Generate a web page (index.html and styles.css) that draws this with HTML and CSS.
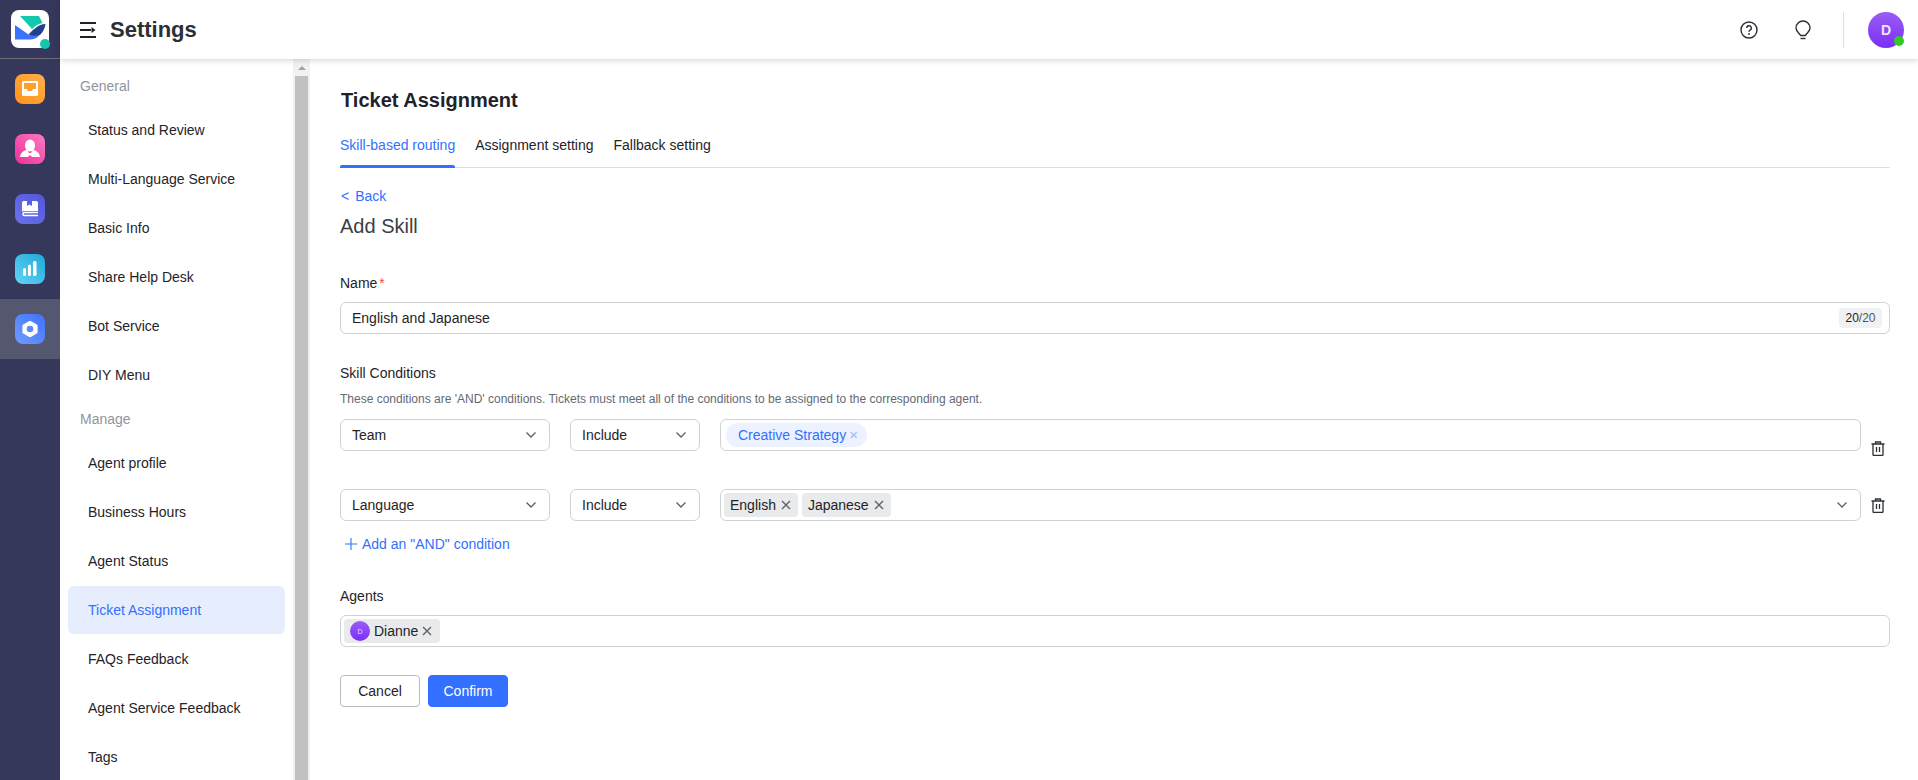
FILE: index.html
```html
<!DOCTYPE html>
<html lang="en">
<head>
<meta charset="utf-8">
<title>Settings</title>
<link rel="stylesheet" href="styles.css">
</head>
<body>
<div class="app">
  <nav class="rail">
    <div class="rail-logo">
      <div class="logo-box">
        <svg width="38" height="38" viewBox="0 0 38 38">
          <path d="M9 6H28L31.500 13C27 14 24 16 21 19Z" fill="#12c9ad"/>
          <path d="M4 15L17.500 24.500L29 24C27 28 23 29.500 18 29.500H4Z" fill="#3a72ff"/>
          <path d="M34.500 14C27 14.500 23 19 17.500 24.500C22 26 27 26 29.500 24.500C32 22 34 18 34.500 14Z" fill="#23408f"/>
        </svg>
        <span class="logo-dot"></span>
      </div>
    </div>
    <a class="rail-item"><span class="tile tile-orange">
      <svg width="30" height="30" viewBox="0 0 30 30"><rect x="7" y="7" width="16" height="15" rx="1.500" fill="#fff"/><path d="M9 9H21V15H18L17 17H13L12 15H9Z" fill="#ffa02e"/></svg>
    </span></a>
    <a class="rail-item"><span class="tile tile-pink">
      <svg width="30" height="30" viewBox="0 0 30 30"><ellipse cx="15" cy="11.500" rx="5" ry="6" fill="#fff"/><path d="M5 23C5.500 18.500 8.500 17 12 15.500L14 19H16L18 15.500C21.500 17 24.500 18.500 25 23H17L16 21.500H14L13 23Z" fill="#fff"/></svg>
    </span></a>
    <a class="rail-item"><span class="tile tile-violet">
      <svg width="30" height="30" viewBox="0 0 30 30"><path d="M8.500 7H12V12L14.500 10.500L17 12V7H21.500A1.500 1.500 0 0 1 23 8.500V17H9.500A2.500 2.500 0 0 0 7 18V8.500A1.500 1.500 0 0 1 8.500 7Z" fill="#fff"/><path d="M23 18.500H9.500A1.500 1.500 0 0 0 9.500 21.500H23" fill="none" stroke="#fff" stroke-width="1.500"/></svg>
    </span></a>
    <a class="rail-item"><span class="tile tile-sky">
      <svg width="30" height="30" viewBox="0 0 30 30"><rect x="8" y="14" width="3" height="8" rx="1.500" fill="#fff"/><rect x="13" y="10.500" width="3" height="11.500" rx="1.500" fill="#fff"/><rect x="18" y="7" width="3.500" height="15" rx="1.500" fill="#fff"/></svg>
    </span></a>
    <a class="rail-item rail-active"><span class="tile tile-blue">
      <svg width="30" height="30" viewBox="0 0 30 30"><path d="M15 8.500L21 11.800V18.200L15 21.500L9 18.200V11.800Z" fill="#fff" stroke="#fff" stroke-width="3.200" stroke-linejoin="round"/><circle cx="15" cy="15" r="3.300" fill="#5f8bff"/></svg>
    </span></a>
  </nav>
  <div class="shell">
    <header class="topbar">
      <svg class="menu-icon" width="16" height="16" viewBox="0 0 16 16"><path d="M0 1H16M0 8H11M0 15H16" fill="none" stroke="#1f2329" stroke-width="2"/><path d="M11.500 5L15.500 8L11.500 11Z" fill="#1f2329"/></svg>
      <h1 class="app-title">Settings</h1>
      <div class="top-actions">
        <svg width="18" height="18" viewBox="0 0 18 18"><circle cx="9" cy="9" r="8" fill="none" stroke="#2b2f36" stroke-width="1.400"/><path d="M6.700 7.100A2.300 2.300 0 1 1 9.900 9.200C9.200 9.600 9 10 9 10.800" fill="none" stroke="#2b2f36" stroke-width="1.400"/><circle cx="9" cy="13" r="0.900" fill="#2b2f36"/></svg>
        <svg class="bulb" width="18" height="20" viewBox="0 0 18 20"><path d="M6.500 15.500C6.300 13.500 2 12 2 8A7 7 0 0 1 16 8C16 12 11.700 13.500 11.500 15.500Z" fill="none" stroke="#2b2f36" stroke-width="1.400" stroke-linejoin="round"/><path d="M6.500 18.500H11.500" stroke="#2b2f36" stroke-width="1.400"/></svg>
        <span class="top-divider"></span>
        <span class="avatar">D<span class="avatar-dot"></span></span>
      </div>
    </header>
    <div class="body">
      <aside class="sidebar">
        <div class="group">General</div>
        <a class="item">Status and Review</a>
        <a class="item">Multi-Language Service</a>
        <a class="item">Basic Info</a>
        <a class="item">Share Help Desk</a>
        <a class="item">Bot Service</a>
        <a class="item">DIY Menu</a>
        <div class="group group-next">Manage</div>
        <a class="item">Agent profile</a>
        <a class="item">Business Hours</a>
        <a class="item">Agent Status</a>
        <a class="item item-active">Ticket Assignment</a>
        <a class="item">FAQs Feedback</a>
        <a class="item">Agent Service Feedback</a>
        <a class="item">Tags</a>
      </aside>
      <div class="scrollbar">
        <span class="scroll-arrow"></span>
        <span class="scroll-thumb"></span>
      </div>
      <main class="main">
        <h2 class="page-title">Ticket Assignment</h2>
        <div class="tabs">
          <a class="tab tab-active">Skill-based routing</a>
          <a class="tab">Assignment setting</a>
          <a class="tab">Fallback setting</a>
        </div>
        <a class="back"><span class="back-mark">&lt;</span>Back</a>
        <h3 class="form-title">Add Skill</h3>

        <div class="label label-name">Name<span class="req">*</span></div>
        <div class="field field-name">
          <span class="field-text">English and Japanese</span>
          <span class="counter">20<span class="counter-max">/20</span></span>
        </div>

        <div class="label label-cond">Skill Conditions</div>
        <div class="hint">These conditions are 'AND' conditions. Tickets must meet all of the conditions to be assigned to the corresponding agent.</div>

        <div class="cond-row">
          <div class="field select select-type">Team
            <svg class="chev" width="12" height="8" viewBox="0 0 12 8"><path d="M1.500 1.500L6 6L10.500 1.500" fill="none" stroke="#5b6068" stroke-width="1.300"/></svg>
          </div>
          <div class="field select select-op">Include
            <svg class="chev" width="12" height="8" viewBox="0 0 12 8"><path d="M1.500 1.500L6 6L10.500 1.500" fill="none" stroke="#5b6068" stroke-width="1.300"/></svg>
          </div>
          <div class="field multi">
            <span class="chip-blue">Creative Strategy<span class="chip-blue-x">×</span></span>
          </div>
          <svg class="trash trash-low" width="14" height="15" viewBox="0 0 14 15"><path d="M0.500 3H13.500M4.500 3V1H9.500V3M2 3V13.500A1 1 0 0 0 3 14.500H11A1 1 0 0 0 12 13.500V3M5.500 6V11M8.500 6V11" fill="none" stroke="#2b2f36" stroke-width="1.300"/></svg>
        </div>

        <div class="cond-row cond-row-last">
          <div class="field select select-type">Language
            <svg class="chev" width="12" height="8" viewBox="0 0 12 8"><path d="M1.500 1.500L6 6L10.500 1.500" fill="none" stroke="#5b6068" stroke-width="1.300"/></svg>
          </div>
          <div class="field select select-op">Include
            <svg class="chev" width="12" height="8" viewBox="0 0 12 8"><path d="M1.500 1.500L6 6L10.500 1.500" fill="none" stroke="#5b6068" stroke-width="1.300"/></svg>
          </div>
          <div class="field multi">
            <span class="chip">English
              <svg class="chip-x" width="10" height="10" viewBox="0 0 10 10"><path d="M1 1L9 9M9 1L1 9" stroke="#5f6368" stroke-width="1.400"/></svg>
            </span>
            <span class="chip">Japanese
              <svg class="chip-x" width="10" height="10" viewBox="0 0 10 10"><path d="M1 1L9 9M9 1L1 9" stroke="#5f6368" stroke-width="1.400"/></svg>
            </span>
            <svg class="chev chev-multi" width="12" height="8" viewBox="0 0 12 8"><path d="M1.500 1.500L6 6L10.500 1.500" fill="none" stroke="#5b6068" stroke-width="1.300"/></svg>
          </div>
          <svg class="trash" width="14" height="15" viewBox="0 0 14 15"><path d="M0.500 3H13.500M4.500 3V1H9.500V3M2 3V13.500A1 1 0 0 0 3 14.500H11A1 1 0 0 0 12 13.500V3M5.500 6V11M8.500 6V11" fill="none" stroke="#2b2f36" stroke-width="1.300"/></svg>
        </div>

        <a class="add-cond">
          <svg width="12" height="12" viewBox="0 0 12 12"><path d="M6 0V12M0 6H12" stroke="#3370ff" stroke-width="1.100"/></svg>
          Add an "AND" condition
        </a>

        <div class="label label-agents">Agents</div>
        <div class="field field-agents">
          <span class="chip chip-agent"><span class="mini-avatar">D</span>Dianne
            <svg class="chip-x" width="10" height="10" viewBox="0 0 10 10"><path d="M1 1L9 9M9 1L1 9" stroke="#5f6368" stroke-width="1.400"/></svg>
          </span>
        </div>

        <div class="actions">
          <button class="btn btn-ghost">Cancel</button>
          <button class="btn btn-primary">Confirm</button>
        </div>
      </main>
    </div>
  </div>
</div>
</body>
</html>
```

FILE: styles.css
```css
* { box-sizing: border-box; }
html, body { margin: 0; height: 780px; overflow: hidden; background: #fff; }
body { font-family: "Liberation Sans", Arial, sans-serif; font-size: 14px; color: #1f2329; }
h1, h2, h3 { margin: 0; }
.app { display: flex; height: 780px; }

.rail { width: 60px; flex: none; background: #35375b; }
.rail-logo { height: 59px; padding: 10px 11px 0; border-bottom: 1px solid #6f6e78; }
.logo-box { width: 38px; height: 38px; background: #fff; border-radius: 8px; position: relative; }
.logo-box svg { display: block; }
.logo-dot { position: absolute; left: 29px; top: 29px; width: 10px; height: 10px; border-radius: 50%; background: #12c9ad; }
.rail-item { height: 60px; display: flex; align-items: center; justify-content: center; }
.rail-active { background: #555770; }
.tile { width: 30px; height: 30px; border-radius: 8px; display: block; }
.tile svg { display: block; }
.tile-orange { background: linear-gradient(45deg, #ff9318, #ffb04f); }
.tile-pink { background: linear-gradient(45deg, #ee2f9c, #fb7cc0); }
.tile-violet { background: linear-gradient(45deg, #6a72ea, #5357da); }
.tile-sky { background: linear-gradient(45deg, #65d4f6, #1fa8d8); }
.tile-blue { background: linear-gradient(45deg, #6f9bff, #3f72fb); }

.shell { flex: 1; min-width: 0; display: flex; flex-direction: column; }
.topbar { height: 59px; flex: none; display: flex; align-items: center; padding: 0 14px 0 20px; background: #fff; box-shadow: 0 1px 6px rgba(0, 0, 0, .18); position: relative; z-index: 2; }
.menu-icon { margin-right: 14px; }
.app-title { font-size: 22px; font-weight: 700; line-height: 30px; color: #2b2f36; }
.top-actions { margin-left: auto; display: flex; align-items: center; }
.bulb { margin-left: 36px; }
.top-divider { width: 1px; height: 36px; background: #dedfe0; margin: 0 24px 0 31px; }
.avatar { width: 36px; height: 36px; border-radius: 50%; background: linear-gradient(180deg, #9b5cf6, #7a2ff5); color: #efe6ff; font-size: 14px; font-weight: 700; display: flex; align-items: center; justify-content: center; position: relative; }
.avatar-dot { position: absolute; right: 0; bottom: 2px; width: 10px; height: 10px; border-radius: 50%; background: #35c927; }

.body { flex: 1; min-height: 0; display: flex; }
.sidebar { width: 233px; flex: none; padding: 7px 8px 0; overflow: hidden; }
.group { height: 40px; line-height: 40px; padding-left: 12px; color: #8f959e; }
.group-next { margin-top: -1px; }
.item { display: block; height: 48px; line-height: 48px; margin-bottom: 1px; padding-left: 20px; border-radius: 6px; color: #1f2329; }
.item-active { background: #e6edfd; color: #3370ff; }
.scrollbar { width: 17px; flex: none; background: #f1f1f1; display: flex; flex-direction: column; align-items: center; }
.scroll-arrow { width: 0; height: 0; margin-top: 7px; border: 4px solid transparent; border-top: 0; border-bottom: 4px solid #a3a3a3; }
.scroll-thumb { width: 13px; flex: 1; margin-top: 6px; background: #c1c1c1; }

.main { flex: 1; min-width: 0; padding: 27px 28px 0 30px; }
.page-title { font-size: 20px; font-weight: 700; line-height: 28px; color: #1f2329; padding-left: 1px; }
.tabs { display: flex; gap: 20px; height: 47px; margin-top: 7px; border-bottom: 1px solid #dedfe0; }
.tab { line-height: 48px; height: 46px; position: relative; color: #1f2329; }
.tab-active { color: #3370ff; }
.tab-active::after { content: ""; position: absolute; left: 0; right: 0; bottom: -1px; height: 3px; border-radius: 2px 2px 0 0; background: #3370ff; }
.back { display: block; margin-top: 18px; line-height: 20px; color: #3370ff; }
.back-mark { margin-right: 6px; margin-left: 1px; }
.form-title { margin-top: 6px; font-size: 20px; font-weight: 400; line-height: 28px; color: #3b3f45; }

.label { line-height: 20px; color: #1f2329; }
.label-name { margin-top: 33px; }
.req { color: #f54a45; margin-left: 2px; }
.label-cond { margin-top: 29px; }
.label-agents { margin-top: 32px; }
.hint { margin-top: 8px; font-size: 12px; line-height: 16px; color: #646a73; }

.field { height: 32px; border: 1px solid #d0d3d6; border-radius: 6px; display: flex; align-items: center; background: #fff; }
.field-name { margin-top: 9px; padding: 0 7px 0 11px; justify-content: space-between; }
.field-text { color: #1f2329; }
.counter { width: 43px; height: 20px; line-height: 20px; text-align: center; background: #f0f1f3; border-radius: 4px; font-size: 12px; color: #1f2329; }
.counter-max { color: #4e5560; }

.cond-row { display: flex; align-items: flex-start; margin-top: 12px; }
.cond-row-last { margin-top: 33px; }
.select { padding: 0 12px 0 11px; justify-content: space-between; }
.select-type { width: 210px; margin-right: 20px; }
.select-op { width: 130px; margin-right: 20px; }
.multi { width: 1141px; padding: 0 12px 0 3px; gap: 4px; }
.chev { flex: none; }
.chev-multi { margin-left: auto; }
.trash { flex: none; margin-left: 10px; margin-top: 9px; }
.trash-low { margin-top: 22px; }
.chip { height: 24px; padding: 0 7px 0 6px; background: #e8eaeb; border-radius: 4px; display: inline-flex; align-items: center; gap: 5px; color: #1f2329; }
.chip-blue { height: 24px; margin-left: 2px; padding: 0 9px 0 12px; background: #ecf2ff; border-radius: 12px; display: inline-flex; align-items: center; color: #3370ff; }
.chip-blue-x { margin-left: 3px; color: #9db9f8; font-size: 15px; line-height: 20px; }
.chip-x { flex: none; }

.add-cond { display: flex; align-items: center; gap: 5px; margin-top: 13px; line-height: 20px; color: #3370ff; padding-left: 5px; }
.add-cond svg { flex: none; }
.field-agents { margin-top: 9px; padding: 0 3px; }
.chip-agent { padding: 0 8px 0 6px; gap: 4px; }
.mini-avatar { width: 20px; height: 20px; border-radius: 50%; background: linear-gradient(180deg, #9b5cf6, #7a2ff5); color: #e9dcff; font-size: 7px; display: flex; align-items: center; justify-content: center; }

.actions { display: flex; gap: 8px; margin-top: 28px; }
.btn { width: 80px; height: 32px; border-radius: 4px; font: 14px "Liberation Sans", Arial, sans-serif; padding: 0; }
.btn-ghost { background: #fff; border: 1px solid #b9bcc1; color: #1f2329; }
.btn-primary { background: #3370ff; border: 1px solid #3370ff; color: #fff; }
```
